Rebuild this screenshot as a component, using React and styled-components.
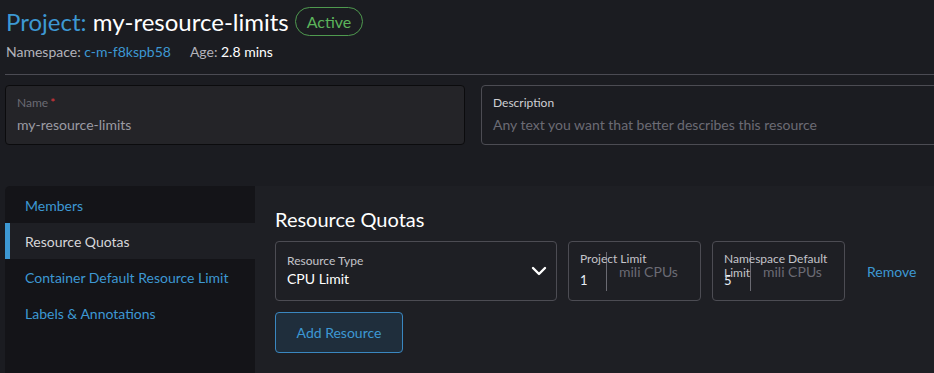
import React from 'react';
import styled, { createGlobalStyle } from 'styled-components';

const Global = createGlobalStyle`
  html, body {
    margin: 0;
    padding: 0;
    background: #1b1c21;
    overflow: hidden;
  }
  body {
    font-family: Lato, "Noto Sans", "Liberation Sans", sans-serif;
    color: #e6e6e6;
  }
`;

const Page = styled.div`
  padding-left: 5px;
  width: 960px;
`;

// header
const TitleRow = styled.div`
  display: flex;
  align-items: center;
  height: 29px;
  margin-top: 7px;
  padding-left: 1px;
`;

const Title = styled.h1`
  margin: 0;
  font-size: 24px;
  font-weight: 400;
  line-height: 29px;
  color: #fff;
  span { color: #3d98d3; }
`;

const Badge = styled.span`
  margin-left: 6px;
  height: 27px;
  padding: 0 11px;
  border: 1px solid #4f9a4f;
  border-radius: 15px;
  display: flex;
  align-items: center;
  font-size: 16px;
  color: #5bb35b;
`;

const Meta = styled.div`
  display: flex;
  gap: 19px;
  margin-top: 7px;
  padding-left: 1px;
  font-size: 14px;
  line-height: 17px;
  color: #b3b3bb;
`;

const MetaItem = styled.span`
  a { color: #3d98d3; text-decoration: none; }
  b { color: #fff; font-weight: 400; }
`;

const Divider = styled.hr`
  margin: 14px 0 10px;
  border: 0;
  border-top: 1px solid #4b4b53;
`;

// name / description
const Fields = styled.div`
  display: grid;
  grid-template-columns: 460px 470px;
  gap: 16px;
`;

const Field = styled.div`
  height: 60px;
  box-sizing: border-box;
  padding: 9px 11px 0;
  border-radius: 4px;
  border: 1px solid ${p => (p.disabled ? '#0b0b0d' : '#4c4c53')};
  background: ${p => (p.disabled ? '#242428' : 'transparent')};
`;

const FieldLabel = styled.div`
  font-size: 12px;
  line-height: 15px;
  color: ${p => (p.dim ? '#6b6b74' : '#cfcfd4')};
  i { color: #e0373d; font-style: normal; margin-left: 2px; }
`;

const FieldValue = styled.div`
  margin-top: 6px;
  font-size: 14px;
  line-height: 18px;
  color: ${p => (p.placeholder ? '#6b6b74' : '#9b9ba3')};
`;

// tabs
const Tabs = styled.div`
  display: flex;
  margin-top: 41px;
  height: 200px;
`;

const Side = styled.ul`
  list-style: none;
  margin: 0;
  padding: 1px 0 0;
  width: 250px;
  background: #141418;
  border-radius: 5px 0 0 0;
`;

const Tab = styled.li`
  height: 36px;
  display: flex;
  align-items: center;
  box-sizing: border-box;
  padding-left: 15px;
  font-size: 14px;
  color: ${p => (p.active ? '#d6d6d9' : '#3d98d3')};
  background: ${p => (p.active ? '#1e1f24' : 'transparent')};
  border-left: 5px solid ${p => (p.active ? '#3d98d3' : 'transparent')};
`;

const Panel = styled.div`
  flex: 1;
  background: #1e1f24;
  padding: 21px 20px 0;
`;

const Heading = styled.h2`
  margin: 0;
  font-size: 20px;
  font-weight: 400;
  line-height: 24px;
  color: #fff;
`;

const QuotaRow = styled.div`
  display: flex;
  align-items: center;
  gap: 11px;
  margin-top: 10px;
`;

const Select = styled.div`
  position: relative;
  width: 282px;
  height: 60px;
  box-sizing: border-box;
  padding: 11px 11px 0;
  border: 1px solid #4c4c53;
  border-radius: 4px;
`;

const SelectLabel = styled.div`
  font-size: 12px;
  line-height: 16px;
  color: #c4c4ca;
`;

const SelectValue = styled.div`
  font-size: 14px;
  line-height: 19px;
  color: #fff;
`;

const Chevron = styled.svg`
  position: absolute;
  right: 9px;
  top: 23px;
`;

const LimitBox = styled.div`
  position: relative;
  width: 133px;
  height: 60px;
  box-sizing: border-box;
  padding-top: 10px;
  border: 1px solid #4c4c53;
  border-radius: 4px;
`;

const LimitLabel = styled.div`
  position: absolute;
  top: 10px;
  left: 11px;
  right: 11px;
  font-size: 12px;
  line-height: 14px;
  color: #c4c4ca;
  z-index: 1;
`;

const Affix = styled.div`
  display: flex;
  height: 39px;
`;

const LimitInput = styled.div`
  width: 38px;
  box-sizing: border-box;
  padding: 0 0 2px 11px;
  display: flex;
  align-items: flex-end;
  font-size: 13px;
  line-height: 18px;
  color: #e8eef6;
  border-right: 1px solid #6a6a72;
`;

const Addon = styled.div`
  display: flex;
  align-items: center;
  padding-left: 12px;
  font-size: 14px;
  color: #6b6b74;
  white-space: nowrap;
`;

const Remove = styled.a`
  margin-left: 11px;
  font-size: 14px;
  color: #3d98d3;
  cursor: pointer;
`;

const AddButton = styled.button`
  margin-top: 11px;
  width: 128px;
  height: 41px;
  border: 1px solid #3a87c0;
  border-radius: 4px;
  background: #1f2e3c;
  color: #3d98d3;
  font-family: inherit;
  font-size: 14px;
`;

const tabs = ['Members', 'Resource Quotas', 'Container Default Resource Limit', 'Labels & Annotations'];

function Limit({ label, value }) {
  return (
    <LimitBox>
      <LimitLabel>{label}</LimitLabel>
      <Affix>
        <LimitInput>{value}</LimitInput>
        <Addon>mili CPUs</Addon>
      </Affix>
    </LimitBox>
  );
}

export default function App() {
  return (
    <Page>
      <Global />
      <TitleRow>
        <Title><span>Project:</span> my-resource-limits</Title>
        <Badge>Active</Badge>
      </TitleRow>
      <Meta>
        <MetaItem>Namespace: <a>c-m-f8kspb58</a></MetaItem>
        <MetaItem>Age: <b>2.8 mins</b></MetaItem>
      </Meta>
      <Divider />

      <Fields>
        <Field disabled>
          <FieldLabel dim>Name<i>*</i></FieldLabel>
          <FieldValue>my-resource-limits</FieldValue>
        </Field>
        <Field>
          <FieldLabel>Description</FieldLabel>
          <FieldValue placeholder="1">Any text you want that better describes this resource</FieldValue>
        </Field>
      </Fields>

      <Tabs>
        <Side>
          {tabs.map((t, i) => (
            <Tab key={t} active={i === 1}>{t}</Tab>
          ))}
        </Side>
        <Panel>
          <Heading>Resource Quotas</Heading>
          <QuotaRow>
            <Select>
              <SelectLabel>Resource Type</SelectLabel>
              <SelectValue>CPU Limit</SelectValue>
              <Chevron width="16" height="12" viewBox="0 0 16 12">
                <path d="M2 3 L8 9 L14 3" fill="none" stroke="#fff" strokeWidth="2.4" strokeLinecap="round" strokeLinejoin="round" />
              </Chevron>
            </Select>
            <Limit label="Project Limit" value="1" />
            <Limit label="Namespace Default Limit" value="5" />
            <Remove>Remove</Remove>
          </QuotaRow>
          <AddButton>Add Resource</AddButton>
        </Panel>
      </Tabs>
    </Page>
  );
}
